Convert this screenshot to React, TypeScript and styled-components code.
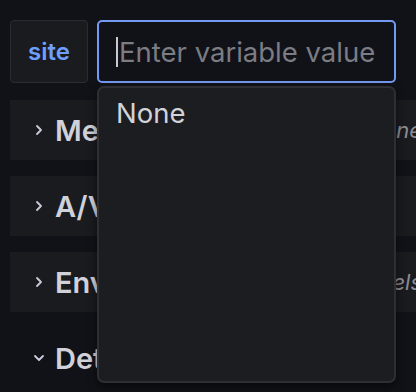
import React from 'react';
import styled, {createGlobalStyle} from "styled-components";

const GlobalStyle = createGlobalStyle`
    html, body {
        margin: 0;
        background: #111217;
        overflow: hidden;
    }
    body {
        font-family: Inter, "Noto Sans", sans-serif;
    }
`

const rows = [
    {title: 'Media', note: 'Timezone', open: false},
    {title: 'A/V', note: '', open: false},
    {title: 'Environment', note: 'Labels', open: false},
    {title: 'Details', note: '', open: true},
];

const Chevron = ({open}: { open: boolean }) => (
    <svg width="14" height="14" viewBox="0 0 14 14" fill="none">
        {open
            ? <path d="M3 5 L7 9 L11 5" stroke="#ccccdc" strokeWidth="1.8" strokeLinecap="round" strokeLinejoin="round"/>
            : <path d="M5 3 L9 7 L5 11" stroke="#ccccdc" strokeWidth="1.8" strokeLinecap="round" strokeLinejoin="round"/>}
    </svg>
);

export default function App() {
    return (
        <Page>
            <GlobalStyle/>
            <VariableBar>
                <Label>site</Label>
                <InputWrap>
                    <Input>
                        <Caret/>
                        <Placeholder>Enter variable value</Placeholder>
                    </Input>
                    <Menu>
                        <Option>None</Option>
                    </Menu>
                </InputWrap>
            </VariableBar>

            <RowList>
                {rows.map(row => (
                    <Row key={row.title} open={row.open}>
                        <Chevron open={row.open}/>
                        <RowTitle>{row.title}</RowTitle>
                        {row.note && <RowNote>{row.note}</RowNote>}
                    </Row>
                ))}
            </RowList>
        </Page>
    );
}

const Page = styled.div`
    padding: 20px 0 0 10px;
    width: 422px;
    height: 392px;
    box-sizing: border-box;
`

const VariableBar = styled.div`
    display: flex;
    gap: 9px;
    height: 63px;
    position: relative;
    z-index: 2;
`

const Label = styled.div`
    width: 78px;
    box-sizing: border-box;
    display: flex;
    align-items: center;
    justify-content: center;
    background: #1a1b1f;
    border: 1px solid #2b2c31;
    border-radius: 4px;
    color: #6e9fff;
    font-size: 24px;
    font-weight: 600;
`

const InputWrap = styled.div`
    position: relative;
    width: 299px;
`

const Input = styled.div`
    height: 100%;
    box-sizing: border-box;
    display: flex;
    align-items: center;
    padding-left: 17px;
    background: #111217;
    border: 2px solid #7399f0;
    border-radius: 5px;
`

const Caret = styled.span`
    width: 2px;
    height: 30px;
    background: #c8c9d0;
    margin-right: 1px;
`

const Placeholder = styled.span`
    color: #7b7c84;
    font-size: 27.5px;
    white-space: nowrap;
`

const Menu = styled.div`
    position: absolute;
    top: 66px;
    left: 0;
    width: 299px;
    height: 297px;
    box-sizing: border-box;
    background: #1c1d21;
    border: 2px solid #2e2f35;
    border-radius: 7px;
    box-shadow: 0 4px 10px rgba(0, 0, 0, 0.5);
    padding: 8px 0 0 17px;
`

const Option = styled.div`
    color: #d2d3da;
    font-size: 27.5px;
    line-height: 34px;
`

const RowList = styled.div`
    display: flex;
    flex-direction: column;
    gap: 16px;
    margin-top: 17px;
`

const Row = styled.div<{ open: boolean }>`
    height: 60px;
    display: flex;
    align-items: center;
    gap: 9px;
    padding: 0 0 0 22px;
    background: ${props => props.open ? 'transparent' : '#1a1b1f'};
    white-space: nowrap;
    overflow: hidden;
`

const RowTitle = styled.span`
    color: #d0d1da;
    font-size: 29px;
    font-weight: 600;
`

const RowNote = styled.span`
    margin-left: auto;
    color: #8b8c95;
    font-size: 22px;
    font-style: italic;
`
